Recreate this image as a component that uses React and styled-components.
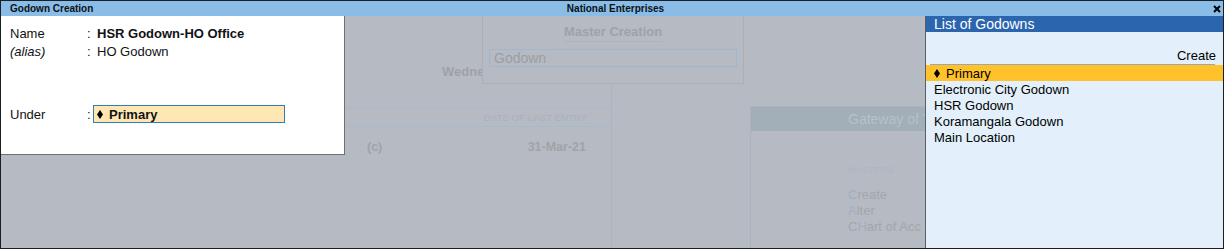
import React from "react";
import styled, { createGlobalStyle } from "styled-components";

const GlobalStyle = createGlobalStyle`
  html, body {
    margin: 0;
    padding: 0;
    background: #ffffff;
  }
  body {
    font-family: "Liberation Sans", Arial, sans-serif;
  }
  * {
    box-sizing: border-box;
  }
`;

//==================================================================
// Outer window and title bar
//==================================================================
const Frame = styled.div`
  width: 1224px;
  height: 249px;
  border: 1px solid #1b1f24;
  display: flex;
  flex-direction: column;
  overflow: hidden;
`;

const TitleBar = styled.div`
  height: 15px;
  flex: none;
  background: #89bce6;
  display: grid;
  grid-template-columns: 1fr auto 1fr;
  align-items: center;
  padding: 0 2px 0 9px;
  font-size: 10px;
  font-weight: bold;
  color: #0d1116;
  line-height: 15px;
`;

const CloseBox = styled.div`
  justify-self: end;
  display: flex;
  align-items: center;
`;

//==================================================================
// Faded "Gateway of Tally" screen behind the popups
//==================================================================
const Workspace = styled.div`
  flex: 1;
  position: relative;
  background: #b6bac2;
  display: flex;
  overflow: hidden;
`;

const CompanyArea = styled.div`
  width: 611px;
  flex: none;
  border-right: 1px solid #adb3b9;
  display: flex;
  flex-direction: column;
  padding-top: 48px;
`;

const DateLine = styled.div`
  padding-left: 441px;
  font-size: 13px;
  font-weight: bold;
  line-height: 16px;
  color: #9ea2a7;
  white-space: nowrap;
  overflow: hidden;
`;

const TableHead = styled.div`
  margin-top: 27px;
  height: 20px;
  border-top: 1px solid #a5bbcc;
  border-bottom: 1px solid #a5bbcc;
  display: flex;
  justify-content: flex-end;
  align-items: center;
  padding-right: 24px;
  font-size: 9.5px;
  color: #a6b2bc;
  letter-spacing: 0.1px;
`;

const TableRow = styled.div`
  margin-top: 12px;
  display: flex;
  justify-content: space-between;
  padding: 0 25px 0 366px;
  font-size: 12.5px;
  font-weight: bold;
  line-height: 16px;
  color: #a0a4a8;
`;

const Gateway = styled.div`
  margin: 90px 0 0 138px;
  width: 175px;
  flex: none;
  border-left: 1px solid #abb4bc;
  border-top: 1px solid #abb4bc;
  display: flex;
  flex-direction: column;
  overflow: hidden;
`;

const GatewayHead = styled.div`
  height: 24px;
  background: #a2aeb8;
  padding-left: 97px;
  font-size: 14px;
  line-height: 24px;
  color: #b9c0c6;
  white-space: nowrap;
  overflow: hidden;
`;

const GatewayBody = styled.div`
  padding: 31px 0 0 97px;
  display: flex;
  flex-direction: column;
  overflow: hidden;
`;

const SectionLabel = styled.div`
  font-size: 9.5px;
  line-height: 16px;
  color: #a9b8c5;
  margin-bottom: 9px;
`;

const MenuItem = styled.div`
  font-size: 13px;
  line-height: 16px;
  color: #a3a7ab;
  white-space: nowrap;
  overflow: hidden;
`;

const HotKey = styled.span`
  color: #9fb0c0;
`;

const MasterPopup = styled.div`
  position: absolute;
  left: 481px;
  top: 0;
  width: 262px;
  height: 68px;
  background: #b6bac2;
  border: 1px solid #a9afb3;
  border-top: none;
  display: flex;
  flex-direction: column;
  align-items: center;
`;

const PopupTitle = styled.div`
  margin-top: 8px;
  font-size: 13px;
  font-weight: bold;
  line-height: 16px;
  color: #9ea3a8;
  border-bottom: 1px solid #adb5bb;
  padding-bottom: 1px;
`;

const PopupField = styled.div`
  margin-top: 7px;
  width: 248px;
  height: 18px;
  border: 1px solid #a1b6c8;
  padding-left: 4px;
  font-size: 14px;
  line-height: 16px;
  color: #9a9fa4;
  align-self: center;
`;

//==================================================================
// Godown Creation panel
//==================================================================
const CreationPanel = styled.div`
  position: absolute;
  left: 0;
  top: 0;
  width: 344px;
  height: 139px;
  background: #ffffff;
  border-right: 1px solid #6f6f6f;
  border-bottom: 1px solid #6f6f6f;
  padding: 8px 0 0 9px;
  display: flex;
  flex-direction: column;
`;

const FieldRow = styled.div`
  display: flex;
  align-items: center;
  height: 18px;
  margin-top: ${(p) => p.$gap || 0}px;
  font-size: 13px;
  color: #101214;
`;

const Label = styled.div`
  width: 77px;
  font-style: ${(p) => (p.$italic ? "italic" : "normal")};
`;

const Colon = styled.div`
  width: 6px;
`;

const Value = styled.div`
  padding-left: 4px;
  font-weight: ${(p) => (p.$bold ? "bold" : "normal")};
`;

const Field = styled.div`
  width: 192px;
  height: 18px;
  background: #ffe7b3;
  border: 1px solid #2d80b8;
  padding-left: 3px;
  display: flex;
  align-items: center;
  gap: 6px;
  font-weight: bold;
`;

//==================================================================
// List of Godowns panel
//==================================================================
const ListPanel = styled.div`
  position: absolute;
  top: 0;
  right: 0;
  bottom: 0;
  width: 298px;
  background: #e3f0fb;
  border-left: 1px solid #5a5d61;
  display: flex;
  flex-direction: column;
`;

const ListHead = styled.div`
  height: 16px;
  background: #2b65ae;
  color: #ffffff;
  font-size: 14px;
  line-height: 16px;
  padding-left: 8px;
`;

const ListAction = styled.div`
  margin-top: 16px;
  padding-right: 7px;
  text-align: right;
  font-size: 13px;
  line-height: 16px;
  color: #000;
`;

const ListRule = styled.div`
  height: 1px;
  margin: 0 8px 0 4px;
  background: #9ea7b0;
`;

const ListItem = styled.div`
  height: 16px;
  display: flex;
  align-items: center;
  gap: 6px;
  padding-left: 8px;
  font-size: 13px;
  color: #000;
  background: ${(p) => (p.$active ? "#ffc22b" : "transparent")};
`;

const Diamond = () => (
  <svg width="6" height="9" viewBox="0 0 6 9">
    <path d="M3 0 L6 4.5 L3 9 L0 4.5 Z" fill="#000" />
  </svg>
);

const CloseIcon = () => (
  <svg width="8" height="8" viewBox="0 0 8 8">
    <path d="M1 1 L7 7 M7 1 L1 7" stroke="#000" strokeWidth="2" />
  </svg>
);

const godowns = [
  "Electronic City Godown",
  "HSR Godown",
  "Koramangala Godown",
  "Main Location",
];

export default function App() {
  return (
    <>
      <GlobalStyle />
      <Frame>
        <TitleBar>
          <span>Godown Creation</span>
          <span>National Enterprises</span>
          <CloseBox>
            <CloseIcon />
          </CloseBox>
        </TitleBar>
        <Workspace>
          <CompanyArea>
            <DateLine>Wedne</DateLine>
            <TableHead>DATE OF LAST ENTRY</TableHead>
            <TableRow>
              <span>(c)</span>
              <span>31-Mar-21</span>
            </TableRow>
          </CompanyArea>
          <Gateway>
            <GatewayHead>Gateway of T</GatewayHead>
            <GatewayBody>
              <SectionLabel>MASTERS</SectionLabel>
              <MenuItem>
                <HotKey>C</HotKey>reate
              </MenuItem>
              <MenuItem>
                <HotKey>A</HotKey>lter
              </MenuItem>
              <MenuItem>
                C<HotKey>H</HotKey>art of Acc
              </MenuItem>
            </GatewayBody>
          </Gateway>

          <MasterPopup>
            <PopupTitle>Master Creation</PopupTitle>
            <PopupField>Godown</PopupField>
          </MasterPopup>

          <CreationPanel>
            <FieldRow>
              <Label>Name</Label>
              <Colon>:</Colon>
              <Value $bold>HSR Godown-HO Office</Value>
            </FieldRow>
            <FieldRow>
              <Label $italic>(alias)</Label>
              <Colon>:</Colon>
              <Value>HO Godown</Value>
            </FieldRow>
            <FieldRow $gap={45}>
              <Label>Under</Label>
              <Colon>:</Colon>
              <Field>
                <Diamond />
                <span>Primary</span>
              </Field>
            </FieldRow>
          </CreationPanel>

          <ListPanel>
            <ListHead>List of Godowns</ListHead>
            <ListAction>Create</ListAction>
            <ListRule />
            <ListItem $active>
              <Diamond />
              <span>Primary</span>
            </ListItem>
            {godowns.map((name) => (
              <ListItem key={name}>{name}</ListItem>
            ))}
          </ListPanel>
        </Workspace>
      </Frame>
    </>
  );
}
